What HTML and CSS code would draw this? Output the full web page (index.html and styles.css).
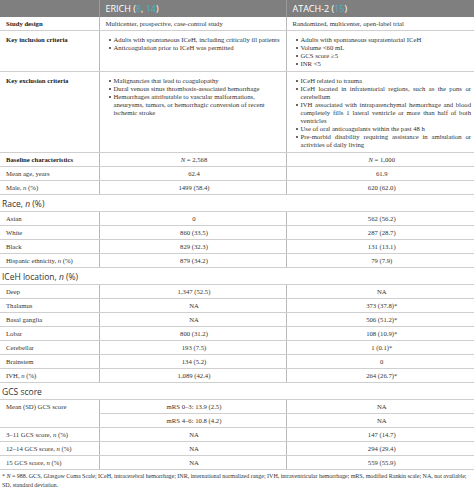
FILE: index.html
```html
<!DOCTYPE html>
<html lang="en">
<head>
<meta charset="utf-8">
<title>ERICH vs ATACH-2</title>
<link rel="stylesheet" href="styles.css">
</head>
<body>
<table class="tbl">
  <colgroup><col class="c1"><col class="c2"><col class="c3"></colgroup>
  <thead>
    <tr class="head">
      <th></th>
      <th>ERICH (<span class="ref">8</span>, <span class="ref">14</span>)</th>
      <th>ATACH-2 (<span class="ref">15</span>)</th>
    </tr>
  </thead>
  <tbody>
    <tr class="txt">
      <td class="lab">Study design</td>
      <td>Multicenter, prospective, case-control study</td>
      <td>Randomized, multicenter, open-label trial</td>
    </tr>
    <tr class="txt multi">
      <td class="lab">Key inclusion criteria</td>
      <td>
        <ul class="bl">
          <li>Adults with spontaneous ICeH, including critically ill patients</li>
          <li>Anticoagulation prior to ICeH was permitted</li>
        </ul>
      </td>
      <td>
        <ul class="bl">
          <li>Adults with spontaneous supratentorial ICeH</li>
          <li>Volume &lt;60 mL</li>
          <li>GCS score ≥5</li>
          <li>INR &lt;5</li>
        </ul>
      </td>
    </tr>
    <tr class="txt multi">
      <td class="lab">Key exclusion criteria</td>
      <td>
        <ul class="bl">
          <li>Malignancies that lead to coagulopathy</li>
          <li>Dural venous sinus thrombosis-associated hemorrhage</li>
          <li>Hemorrhages attributable to vascular malformations, aneurysms, tumors, or hemorrhagic conversion of recent ischemic stroke</li>
        </ul>
      </td>
      <td>
        <ul class="bl just">
          <li>ICeH related to trauma</li>
          <li>ICeH located in infratentorial regions, such as the pons or cerebellum</li>
          <li>IVH associated with intraparenchymal hemorrhage and blood completely fills 1 lateral ventricle or more than half of both ventricles</li>
          <li>Use of oral anticoagulants within the past 48 h</li>
          <li>Pre-morbid disability requiring assistance in ambulation or activities of daily living</li>
        </ul>
      </td>
    </tr>
    <tr class="row">
      <td class="lab">Baseline characteristics</td>
      <td><i>N</i> = 2,568</td>
      <td><i>N</i> = 1,000</td>
    </tr>
    <tr class="row"><td>Mean age, years</td><td>62.4</td><td>61.9</td></tr>
    <tr class="row"><td>Male, <i>n</i> (%)</td><td>1499 (58.4)</td><td>620 (62.0)</td></tr>
    <tr class="sec"><td colspan="3">Race, <i>n</i> (%)</td></tr>
    <tr class="row"><td>Asian</td><td>0</td><td>562 (56.2)</td></tr>
    <tr class="row"><td>White</td><td>860 (33.5)</td><td>287 (28.7)</td></tr>
    <tr class="row"><td>Black</td><td>829 (32.3)</td><td>131 (13.1)</td></tr>
    <tr class="row"><td>Hispanic ethnicity, <i>n</i> (%)</td><td>879 (34.2)</td><td>79 (7.9)</td></tr>
    <tr class="sec"><td colspan="3">ICeH location, <i>n</i> (%)</td></tr>
    <tr class="row"><td>Deep</td><td>1,347 (52.5)</td><td>NA</td></tr>
    <tr class="row"><td>Thalamus</td><td>NA</td><td>373 (37.8)*</td></tr>
    <tr class="row"><td>Basal ganglia</td><td>NA</td><td>506 (51.2)*</td></tr>
    <tr class="row"><td>Lobar</td><td>800 (31.2)</td><td>108 (10.9)*</td></tr>
    <tr class="row"><td>Cerebellar</td><td>193 (7.5)</td><td>1 (0.1)*</td></tr>
    <tr class="row"><td>Brainstem</td><td>134 (5.2)</td><td>0</td></tr>
    <tr class="row"><td>IVH, <i>n</i> (%)</td><td>1,089 (42.4)</td><td>264 (26.7)*</td></tr>
    <tr class="sec"><td colspan="3">GCS score</td></tr>
    <tr class="row"><td rowspan="2" class="top">Mean (SD) GCS score</td><td>mRS 0–3: 13.9 (2.5)</td><td>NA</td></tr>
    <tr class="row"><td class="sub">mRS 4–6: 10.8 (4.2)</td><td>NA</td></tr>
    <tr class="row"><td>3–11 GCS score, <i>n</i> (%)</td><td>NA</td><td>147 (14.7)</td></tr>
    <tr class="row"><td>12–14 GCS score, <i>n</i> (%)</td><td>NA</td><td>294 (29.4)</td></tr>
    <tr class="row"><td>15 GCS score, <i>n</i> (%)</td><td>NA</td><td>559 (55.9)</td></tr>
  </tbody>
</table>
<div class="note">
  <p>* <i>N</i> = 988. GCS, Glasgow Coma Scale; ICeH, intracerebral hemorrhage; INR, international normalized range; IVH, intraventricular hemorrhage; mRS, modified Rankin scale; NA, not available;</p>
  <p>SD, standard deviation.</p>
</div>
</body>
</html>
```

FILE: styles.css
```css
html, body {
  margin: 0;
  padding: 0;
  background: #ffffff;
}
body {
  width: 474px;
  font-family: "Liberation Serif", "Times New Roman", serif;
  color: #333333;
  font-size: 6.7px;
}
.tbl {
  width: 474px;
  border-collapse: collapse;
  table-layout: fixed;
}
.c1 { width: 99px; }
.c2 { width: 187px; }
.c3 { width: 188px; }

.head th {
  background: #7f7f7f;
  color: #ffffff;
  font-family: "Open Sans", "Liberation Sans", sans-serif;
  font-weight: 400;
  font-size: 9px;
  line-height: 11px;
  padding: 3px 6px 3px 6px;
  text-align: left;
}
.head th + th {
  border-left: 1px solid #9a9a9a;
}
.ref {
  color: #3fb6c3;
}

.tbl td {
  border-bottom: 1px solid #cfcfcf;
  line-height: 8px;
  padding: 3px 3px 2px 6px;
  vertical-align: middle;
}
.tbl td + td,
.tbl td.sub {
  border-left: 1px solid #b9b9b9;
}
.row td + td,
.row td.sub {
  text-align: center;
}
.tbl td.lab {
  font-weight: 700;
  color: #222222;
}
.txt td {
  vertical-align: top;
}
.multi td {
  padding-top: 5px;
  padding-bottom: 3px;
}
.tbl td.top {
  vertical-align: top;
  padding-top: 3px;
}
.sec td {
  font-family: "Open Sans", "Liberation Sans", sans-serif;
  font-size: 8.5px;
  line-height: 11px;
  color: #333333;
  padding: 3px 2px 2px 2px;
}

.bl {
  list-style: none;
  margin: 0;
  padding: 0;
}
.bl li {
  position: relative;
  padding-left: 8px;
}
.bl.just li {
  text-align: justify;
}
.bl li::before {
  content: "";
  position: absolute;
  left: 3px;
  top: 3px;
  width: 2px;
  height: 2px;
  border-radius: 50%;
  background: #333333;
}

.note {
  padding: 2px 2px 0 2px;
  font-size: 6.1px;
  line-height: 8.5px;
  letter-spacing: -0.05px;
}
.note p {
  margin: 0;
}
```
